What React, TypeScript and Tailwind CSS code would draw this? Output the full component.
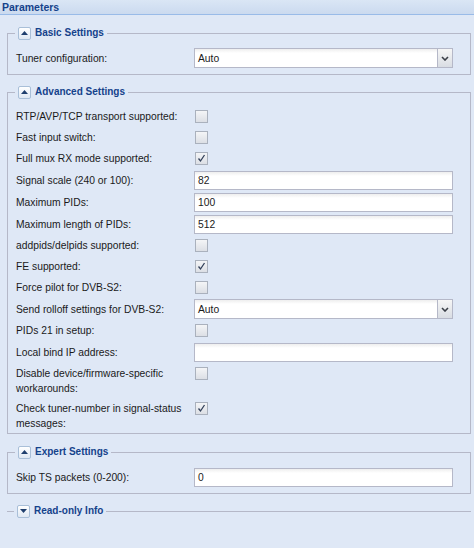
import React from "react";

const ToolButton = ({ collapsed }: { collapsed?: boolean }) => (
  <span className="flex h-[13px] w-[13px] items-center justify-center rounded-[2px] border border-[#a9bfd8] bg-[linear-gradient(#ffffff,#dfe8f3)]">
    <svg width="7" height="4" viewBox="0 0 7 4">
      {collapsed ? (
        <path d="M0 0h7L3.5 4z" fill="#1f3f6e" />
      ) : (
        <path d="M0 4h7L3.5 0z" fill="#1f3f6e" />
      )}
    </svg>
  </span>
);

const FieldSet = ({
  title,
  collapsed,
  className,
  children,
}: {
  title: string;
  collapsed?: boolean;
  className?: string;
  children?: React.ReactNode;
}) => (
  <fieldset
    className={`ml-[7px] mr-[3px] ${
      collapsed ? "border-t border-[#b5b8c8]" : "border border-[#b5b8c8]"
    } ${className || ""}`}
  >
    <legend className="ml-[7px] flex h-[14px] items-center gap-[4px] px-[3px]">
      <ToolButton collapsed={collapsed} />
      <span className="text-[10px] font-bold leading-[14px] text-[#15428b]">{title}</span>
    </legend>
    {children}
  </fieldset>
);

const Row = ({
  label,
  h = "h-[22px]",
  multi,
  children,
}: {
  label: string;
  h?: string;
  multi?: boolean;
  children: React.ReactNode;
}) => (
  <div className={`flex ${h} ${multi ? "items-start" : "items-center"}`}>
    <label className={`w-[178px] shrink-0 pr-2 leading-[15px] text-[#1a1a1a] ${multi ? "pt-[3px]" : ""}`}>
      {label}
    </label>
    <div className={multi ? "pt-[4px]" : ""}>{children}</div>
  </div>
);

const TextField = ({ value = "" }: { value?: string }) => (
  <div className="flex h-[19px] w-[259px] items-center border border-[#b5b8c8] bg-[linear-gradient(#eeeeee,#ffffff_4px)] px-[3px] leading-[15px] text-[#1a1a1a]">
    {value}
  </div>
);

const Combo = ({ value }: { value: string }) => (
  <div className="flex h-[20px] w-[259px]">
    <div className="flex flex-1 items-center border border-r-0 border-[#b5b8c8] bg-[linear-gradient(#eeeeee,#ffffff_4px)] px-[3px] leading-[15px] text-[#1a1a1a]">
      {value}
    </div>
    <div className="flex w-[16px] items-center justify-center border border-[#b5b8c8] bg-[linear-gradient(#f6f6f6,#d9dde3)]">
      <svg width="8" height="5" viewBox="0 0 8 5">
        <path d="M1 1l3 3 3-3" fill="none" stroke="#3a3f47" strokeWidth="1.6" />
      </svg>
    </div>
  </div>
);

const Check = ({ checked }: { checked?: boolean }) => (
  <span className="ml-[1px] flex h-[13px] w-[13px] items-center justify-center border border-[#aab1bd] bg-[linear-gradient(#f4f5f7,#dcdfe5)]">
    {checked && (
      <svg width="9" height="9" viewBox="0 0 9 9">
        <path d="M1.5 4.5l2 2.5 4-6" fill="none" stroke="#33415a" strokeWidth="1.3" />
      </svg>
    )}
  </span>
);

export default function App() {
  return (
    <div className="h-[548px] w-[474px] overflow-hidden bg-[#dfe8f6] font-['Liberation_Sans',Arial,sans-serif] text-[10.3px]">
      {/* Header */}
      <div className="flex h-[15px] items-center border-b border-[#99bbe8] bg-[linear-gradient(#dae6f5,#cbdaef)] px-[2px]">
        <span className="text-[10.5px] font-bold leading-[12px] text-[#15428b]">Parameters</span>
      </div>

      <div className="pt-[11px]">
        <FieldSet title="Basic Settings">
          <div className="pl-[8px] pr-[17px] pb-[5px] pt-[7px]">
            <Row label="Tuner configuration:">
              <Combo value="Auto" />
            </Row>
          </div>
        </FieldSet>

        <FieldSet title="Advanced Settings" className="mt-[10px]">
          <div className="pl-[8px] pr-[17px] pt-[7px]">
            <Row label="RTP/AVP/TCP transport supported:" h="h-[21px]">
              <Check />
            </Row>
            <Row label="Fast input switch:" h="h-[21px]">
              <Check />
            </Row>
            <Row label="Full mux RX mode supported:" h="h-[21px]">
              <Check checked />
            </Row>
            <Row label="Signal scale (240 or 100):">
              <TextField value="82" />
            </Row>
            <Row label="Maximum PIDs:">
              <TextField value="100" />
            </Row>
            <Row label="Maximum length of PIDs:">
              <TextField value="512" />
            </Row>
            <Row label="addpids/delpids supported:" h="h-[21px]">
              <Check />
            </Row>
            <Row label="FE supported:" h="h-[21px]">
              <Check checked />
            </Row>
            <Row label="Force pilot for DVB-S2:" h="h-[21px]">
              <Check />
            </Row>
            <Row label="Send rolloff settings for DVB-S2:">
              <Combo value="Auto" />
            </Row>
            <Row label="PIDs 21 in setup:" h="h-[21px]">
              <Check />
            </Row>
            <Row label="Local bind IP address:">
              <TextField />
            </Row>
            <Row label="Disable device/firmware-specific workarounds:" h="h-[35px]" multi>
              <Check />
            </Row>
            <Row label="Check tuner-number in signal-status messages:" h="h-[35px]" multi>
              <Check checked />
            </Row>
          </div>
        </FieldSet>

        <FieldSet title="Expert Settings" className="mt-[11px]">
          <div className="pl-[8px] pr-[17px] pb-[5px] pt-[7px]">
            <Row label="Skip TS packets (0-200):">
              <TextField value="0" />
            </Row>
          </div>
        </FieldSet>

        <FieldSet title="Read-only Info" collapsed className="mt-[10px]" />
      </div>
    </div>
  );
}
